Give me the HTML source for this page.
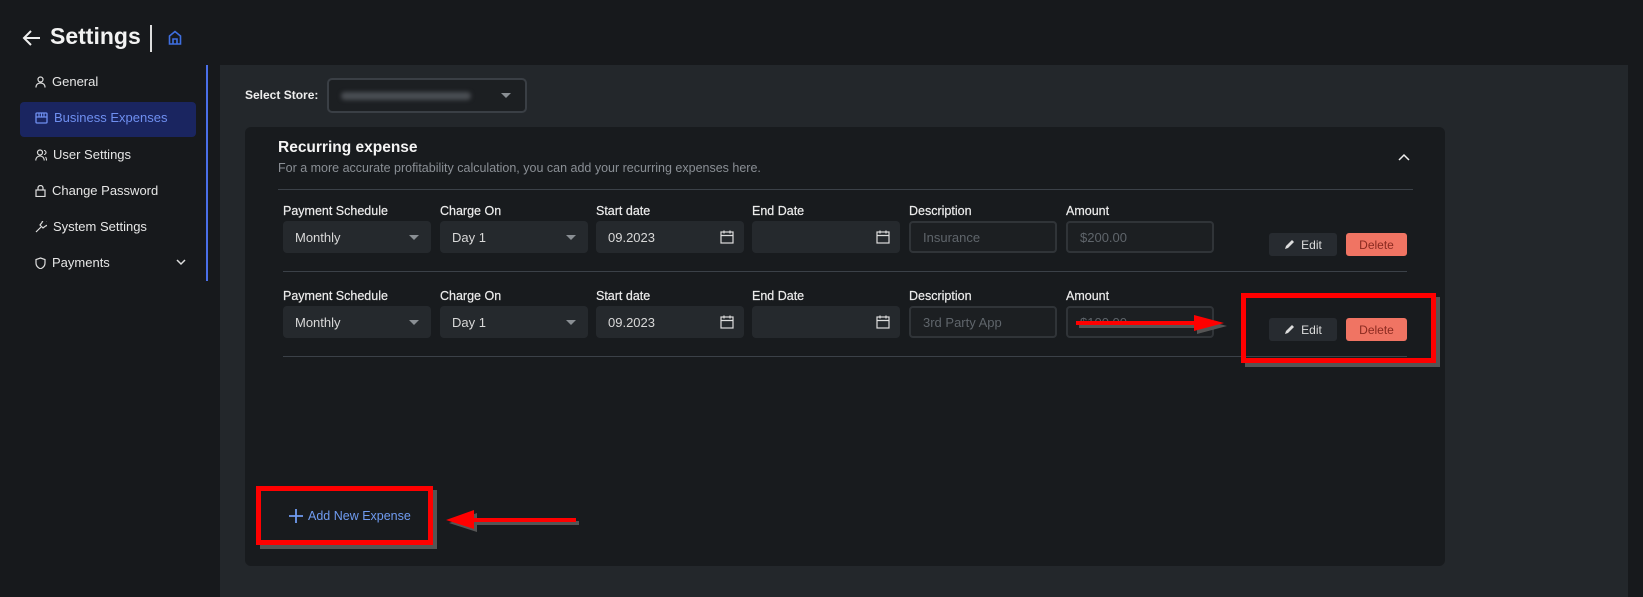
<!DOCTYPE html>
<html><head><meta charset="utf-8"><style>
*{box-sizing:border-box;margin:0;padding:0}
body{width:1643px;height:597px;background:#17191c;font-family:"Liberation Sans",sans-serif;color:#e8e8e8;position:relative;overflow:hidden}
.abs{position:absolute}
.side{font-size:13px;color:#e6e6e6;display:flex;align-items:center;gap:6px;left:35px}
.main{left:220px;top:65px;width:1408px;height:532px;background:#23272b}
.card{left:245px;top:127px;width:1200px;height:439px;background:#181b1e;border-radius:6px}
.lbl{font-size:12.5px;color:#ececec;-webkit-text-stroke:0.2px #ececec}
.inp{width:148px;height:32px;background:#25292d;border-radius:4px;font-size:13px;color:#d8d8d8;padding-left:12px;display:flex;align-items:center}
.out{background:#1c1f22;border:2px solid #303438;color:#5f656b}
.tri{position:absolute;right:12px;top:14px;width:0;height:0;border-left:5px solid transparent;border-right:5px solid transparent;border-top:5px solid #8a8f94}
.cal{position:absolute;right:10px;top:9px}
.hl{height:1px;background:#3b4148}
.btn{height:23px;border-radius:3px;font-size:12px;display:flex;align-items:center;justify-content:center}
.edit{width:68px;background:#272b30;color:#ddd;gap:6px}
.del{width:61px;background:#f07463;color:#8a2a20}
.red{border:5px solid #f00;box-shadow:4px 4px 0 #555}
</style></head><body>
<svg class="abs" style="left:22px;top:29px" width="20" height="18" viewBox="0 0 20 18"><path d="M18 9H3M9 2L2 9l7 7" fill="none" stroke="#eee" stroke-width="2"/></svg>
<div class="abs" style="left:50px;top:23px;font-size:23px;font-weight:bold;color:#f2f2f2">Settings</div>
<div class="abs" style="left:150px;top:25px;width:1.5px;height:27px;background:#ddd"></div>
<svg class="abs" style="left:168px;top:30px" width="14" height="15" viewBox="0 0 14 15"><path d="M1.5 14V6L7 1.5 12.5 6V14ZM5 14V9h4v5" fill="none" stroke="#3f6fe0" stroke-width="1.6"/></svg>

<div class="abs side" style="top:74px"><svg width="11" height="12"><circle cx="5.5" cy="3.5" r="2.5" fill="none" stroke="#ddd" stroke-width="1.2"/><path d="M1 11.5c0-3 2-4.5 4.5-4.5S10 8.5 10 11.5" fill="none" stroke="#ddd" stroke-width="1.2"/></svg>General</div>
<div class="abs" style="left:20px;top:102px;width:176px;height:35px;background:#1a2560;border-radius:4px"></div>
<div class="abs side" style="top:110px;color:#6f8ff0"><svg width="13" height="12"><rect x="1" y="1" width="11" height="10" rx="1" fill="none" stroke="#6f8ff0" stroke-width="1.3"/><path d="M1 5h11M4 1v4M6.5 1v4M9 1v4" stroke="#6f8ff0" stroke-width="1.2"/></svg>Business Expenses</div>
<div class="abs side" style="top:147px"><svg width="12" height="12"><circle cx="5" cy="3.5" r="2.5" fill="none" stroke="#ddd" stroke-width="1.2"/><path d="M0.8 11.5c0-3 2-4.5 4.2-4.5s4.2 1.5 4.2 4.5M9 1.5a2 2 0 010 4M10.5 8c.8.7 1 2 1 3.5" fill="none" stroke="#ddd" stroke-width="1.1"/></svg>User Settings</div>
<div class="abs side" style="top:183px"><svg width="11" height="12"><rect x="1" y="5" width="9" height="6.5" fill="none" stroke="#ddd" stroke-width="1.2"/><path d="M3 5V3a2.5 2.5 0 015 0v2" fill="none" stroke="#ddd" stroke-width="1.2"/></svg>Change Password</div>
<div class="abs side" style="top:219px"><svg width="12" height="12"><path d="M1 11l5-5M7 1.5a3 3 0 113.5 3.5L8 7 5 4z" fill="none" stroke="#ddd" stroke-width="1.2"/></svg>System Settings</div>
<div class="abs side" style="top:255px"><svg width="11" height="12"><path d="M5.5 1L10 2.5v3.5c0 3-2 4.8-4.5 5.8C3 10.8 1 9 1 6V2.5z" fill="none" stroke="#ddd" stroke-width="1.2"/></svg>Payments</div>
<svg class="abs" style="left:176px;top:259px" width="10" height="7"><path d="M1 1l4 4 4-4" fill="none" stroke="#ddd" stroke-width="1.5"/></svg>
<div class="abs" style="left:206px;top:65px;width:2px;height:216px;background:#4a6fe8"></div>

<div class="abs main"></div>
<div class="abs" style="left:245px;top:88px;font-size:12px;font-weight:bold;color:#eee">Select Store:</div>
<div class="abs" style="left:327px;top:78px;width:200px;height:35px;border:2px solid #3a3f45;border-radius:5px;background:#1c1f22">
<div style="position:absolute;left:12px;top:12px;width:130px;height:8px;background:#4a4e53;border-radius:4px;filter:blur(2px)"></div>
<div class="tri" style="right:14px;top:13px"></div></div>

<div class="abs card"></div>
<div class="abs" style="left:278px;top:139px;font-size:15.5px;font-weight:bold;color:#f4f4f4">Recurring expense</div>
<div class="abs" style="left:278px;top:161px;font-size:12.5px;color:#8a8f95">For a more accurate profitability calculation, you can add your recurring expenses here.</div>
<svg class="abs" style="left:1398px;top:153px" width="12" height="8"><path d="M1 7l5-5 5 5" fill="none" stroke="#eee" stroke-width="1.5"/></svg>
<div class="abs hl" style="left:278px;top:189px;width:1135px"></div>

<!-- row 1 -->
<div class="abs lbl" style="left:283px;top:204px">Payment Schedule</div>
<div class="abs lbl" style="left:440px;top:204px">Charge On</div>
<div class="abs lbl" style="left:596px;top:204px">Start date</div>
<div class="abs lbl" style="left:752px;top:204px">End Date</div>
<div class="abs lbl" style="left:909px;top:204px">Description</div>
<div class="abs lbl" style="left:1066px;top:204px">Amount</div>
<div class="abs inp" style="left:283px;top:221px">Monthly<div class="tri"></div></div>
<div class="abs inp" style="left:440px;top:221px">Day 1<div class="tri"></div></div>
<div class="abs inp" style="left:596px;top:221px">09.2023<svg class="cal" width="14" height="14"><rect x="1" y="2" width="12" height="11" fill="none" stroke="#ddd" stroke-width="1.2"/><path d="M1 5.5h12M4 0.5v3M10 0.5v3" stroke="#ddd" stroke-width="1.2"/></svg></div>
<div class="abs inp" style="left:752px;top:221px"><svg class="cal" width="14" height="14"><rect x="1" y="2" width="12" height="11" fill="none" stroke="#ddd" stroke-width="1.2"/><path d="M1 5.5h12M4 0.5v3M10 0.5v3" stroke="#ddd" stroke-width="1.2"/></svg></div>
<div class="abs inp out" style="left:909px;top:221px">Insurance</div>
<div class="abs inp out" style="left:1066px;top:221px">$200.00</div>
<div class="abs btn edit" style="left:1269px;top:233px"><svg width="11" height="11"><path d="M1 10l1-3 6-6 2 2-6 6z" fill="#ddd"/></svg>Edit</div>
<div class="abs btn del" style="left:1346px;top:233px">Delete</div>
<div class="abs hl" style="left:283px;top:271px;width:1124px"></div>

<!-- row 2 -->
<div class="abs lbl" style="left:283px;top:289px">Payment Schedule</div>
<div class="abs lbl" style="left:440px;top:289px">Charge On</div>
<div class="abs lbl" style="left:596px;top:289px">Start date</div>
<div class="abs lbl" style="left:752px;top:289px">End Date</div>
<div class="abs lbl" style="left:909px;top:289px">Description</div>
<div class="abs lbl" style="left:1066px;top:289px">Amount</div>
<div class="abs inp" style="left:283px;top:306px">Monthly<div class="tri"></div></div>
<div class="abs inp" style="left:440px;top:306px">Day 1<div class="tri"></div></div>
<div class="abs inp" style="left:596px;top:306px">09.2023<svg class="cal" width="14" height="14"><rect x="1" y="2" width="12" height="11" fill="none" stroke="#ddd" stroke-width="1.2"/><path d="M1 5.5h12M4 0.5v3M10 0.5v3" stroke="#ddd" stroke-width="1.2"/></svg></div>
<div class="abs inp" style="left:752px;top:306px"><svg class="cal" width="14" height="14"><rect x="1" y="2" width="12" height="11" fill="none" stroke="#ddd" stroke-width="1.2"/><path d="M1 5.5h12M4 0.5v3M10 0.5v3" stroke="#ddd" stroke-width="1.2"/></svg></div>
<div class="abs inp out" style="left:909px;top:306px">3rd Party App</div>
<div class="abs inp out" style="left:1066px;top:306px">$100.00</div>
<div class="abs btn edit" style="left:1269px;top:318px"><svg width="11" height="11"><path d="M1 10l1-3 6-6 2 2-6 6z" fill="#ddd"/></svg>Edit</div>
<div class="abs btn del" style="left:1346px;top:318px">Delete</div>
<div class="abs hl" style="left:283px;top:356px;width:1124px"></div>

<!-- annotations -->
<div class="abs red" style="left:1241px;top:293px;width:195px;height:70px"></div>
<svg class="abs" style="left:1070px;top:312px" width="170" height="26"><g transform="translate(3,3)" fill="#555"><rect x="6" y="9" width="120" height="4"/><path d="M124 3l30 8-30 8z"/></g><rect x="6" y="9" width="120" height="4" fill="#f00"/><path d="M124 3l30 8-30 8z" fill="#f00"/></svg>
<div class="abs red" style="left:256px;top:486px;width:177px;height:59px"></div>
<svg class="abs" style="left:288px;top:508px" width="16" height="16"><path d="M8 1v14M1 8h14" stroke="#6f9bf0" stroke-width="1.8"/></svg>
<div class="abs" style="left:308px;top:509px;font-size:12.5px;color:#6f9bf0">Add New Expense</div>
<svg class="abs" style="left:444px;top:509px" width="140" height="26"><g transform="translate(3,3)" fill="#555"><rect x="28" y="9" width="104" height="4"/><path d="M30 1L2 11l28 9z"/></g><rect x="28" y="9" width="104" height="4" fill="#f00"/><path d="M30 1L2 11l28 9z" fill="#f00"/></svg>
</body></html>
